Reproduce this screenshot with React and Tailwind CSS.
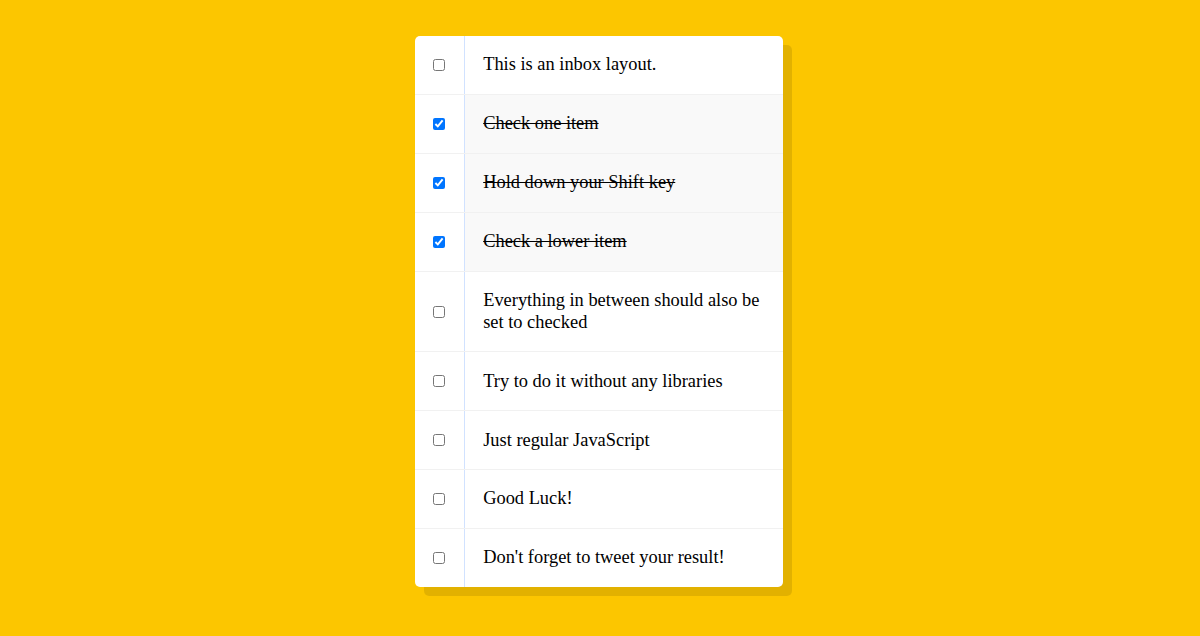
import React, { useState, useRef } from "react";

const ITEMS = [
  ["This is an inbox layout.", false],
  ["Check one item", true],
  ["Hold down your Shift key", true],
  ["Check a lower item", true],
  ["Everything in between should also be set to checked", false],
  ["Try to do it without any libraries", false],
  ["Just regular JavaScript", false],
  ["Good Luck!", false],
  ["Don't forget to tweet your result!", false],
];

export default function App() {
  const [checked, setChecked] = useState(ITEMS.map((i) => i[1]));
  const last = useRef(null);

  const onClick = (idx, e) => {
    const next = [...checked];
    const val = !next[idx];
    next[idx] = val;
    if (e.shiftKey && val && last.current !== null) {
      const [a, b] = [Math.min(last.current, idx), Math.max(last.current, idx)];
      for (let i = a; i <= b; i++) next[i] = true;
    }
    last.current = idx;
    setChecked(next);
  };

  return (
    <div className="min-h-[636px] w-full bg-[#fcc600] pt-[36px] pb-[50px]" style={{ fontFamily: '"Liberation Serif", "Times New Roman", serif' }}>
      <div className="ml-[calc(50%-185px)] w-[368px] rounded-[5px] bg-white shadow-[9px_9px_0_rgba(0,0,0,0.1)]">
        {ITEMS.map(([text], idx) => (
          <div
            key={idx}
            className={`flex items-center ${idx < ITEMS.length - 1 ? "border-b border-[#f1f1f1]" : ""}`}
          >
            <input
              type="checkbox"
              checked={checked[idx]}
              onChange={() => {}}
              onClick={(e) => onClick(idx, e)}
              className="m-[18.4px] h-[12px] w-[12px] shrink-0"
            />
            <p
              className={`m-0 flex-1 self-stretch border-l border-l-[#d1e2ff] px-[18.4px] py-[18.4px] text-[18.4px] leading-[21.2px] text-black ${
                checked[idx] ? "bg-[#f9f9f9] line-through" : ""
              }`}
            >
              {text}
            </p>
          </div>
        ))}
      </div>
    </div>
  );
}
